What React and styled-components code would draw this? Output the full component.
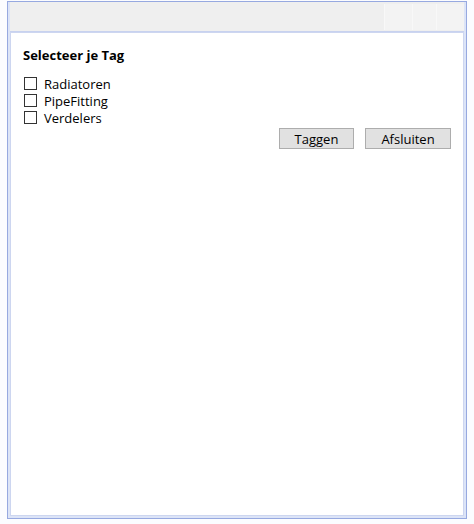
import React from "react";
import styled, { createGlobalStyle } from "styled-components";

const Global = createGlobalStyle`
  html, body { margin: 0; padding: 0; background: #ffffff; }
  body { font-family: "Open Sans", "Noto Sans", sans-serif; }
`;

const Page = styled.div`
  width: 474px;
  height: 524px;
  padding: 1px 0 0 7px;
  box-sizing: border-box;
  background: #fbfcff;
`;

const Window = styled.div`
  width: 460px;
  height: 518px;
  box-sizing: border-box;
  border: 1px solid #97a9e0;
  background: #dce4f7;
  padding: 0 2px 2px 2px;
  display: flex;
  flex-direction: column;
`;

const TitleBar = styled.div`
  height: 30px;
  background: #efefef;
  display: flex;
  justify-content: flex-end;
  align-items: flex-start;
  padding-top: 2px;
  box-sizing: border-box;
  border-bottom: 1px solid #c8d2ef;
`;

const TitleButton = styled.div`
  width: ${(p) => p.$w}px;
  height: 26px;
  background: #f3f3f3;
  border-left: 1px solid #f8f8f8;
`;

const Content = styled.div`
  flex: 1;
  background: #ffffff;
  border: 1px solid #cdd6f0;
  padding: 14px 12px 0 12px;
  display: flex;
  flex-direction: column;
`;

const Heading = styled.div`
  font-weight: 700;
  font-size: 13px;
  line-height: 17px;
  color: #000;
  margin-bottom: 11px;
`;

const CheckRow = styled.label`
  display: flex;
  align-items: center;
  height: 17px;
  font-size: 13px;
  color: #000;
  gap: 7px;
  padding-left: 1px;
`;

const Box = styled.span`
  width: 13px;
  height: 13px;
  box-sizing: border-box;
  border: 1px solid #333;
  background: #fff;
`;

const Buttons = styled.div`
  display: flex;
  justify-content: flex-end;
  gap: 11px;
  margin-top: 2px;
`;

const Button = styled.div`
  width: ${(p) => p.$w}px;
  height: 21px;
  box-sizing: border-box;
  background: #e1e1e1;
  border: 1px solid #adadad;
  font-size: 13px;
  display: flex;
  align-items: center;
  justify-content: center;
  color: #000;
`;

export default function App() {
  const items = ["Radiatoren", "PipeFitting", "Verdelers"];
  return (
    <>
      <Global />
      <Page>
        <Window>
          <TitleBar>
            <TitleButton $w={27} />
            <TitleButton $w={23} />
            <TitleButton $w={27} />
          </TitleBar>
          <Content>
            <Heading>Selecteer je Tag</Heading>
            {items.map((t) => (
              <CheckRow key={t}>
                <Box />
                {t}
              </CheckRow>
            ))}
            <Buttons>
              <Button $w={75}>Taggen</Button>
              <Button $w={86}>Afsluiten</Button>
            </Buttons>
          </Content>
        </Window>
      </Page>
    </>
  );
}
